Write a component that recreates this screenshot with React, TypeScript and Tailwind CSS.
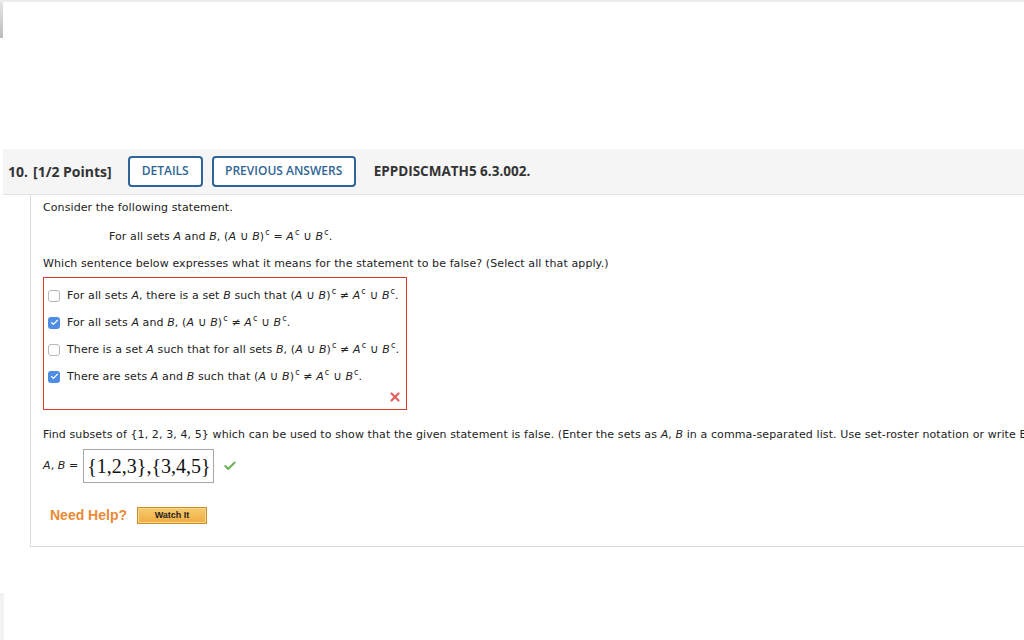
import { Check, X } from 'lucide-react';

const Sup = ({ children }: { children: React.ReactNode }) => (
  <sup className="text-[8px] -top-[5px] ml-[1px]">{children}</sup>
);

// (A ∪ B)^c <op> A^c ∪ B^c
function Expr({ op }: { op: string }) {
  return (
    <span>
      (<i>A</i> <span className="text-[12px]">∪</span> <i>B</i>)<Sup>c</Sup> {op} <i>A</i>
      <Sup>c</Sup> <span className="text-[12px]">∪</span> <i>B</i>
      <Sup>c</Sup>.
    </span>
  );
}

const OPTIONS = [
  {
    checked: false,
    text: (
      <>
        For all sets <i>A</i>, there is a set <i>B</i> such that <Expr op="≠" />
      </>
    ),
  },
  {
    checked: true,
    text: (
      <>
        For all sets <i>A</i> and <i>B</i>, <Expr op="≠" />
      </>
    ),
  },
  {
    checked: false,
    text: (
      <>
        There is a set <i>A</i> such that for all sets <i>B</i>, <Expr op="≠" />
      </>
    ),
  },
  {
    checked: true,
    text: (
      <>
        There are sets <i>A</i> and <i>B</i> such that <Expr op="≠" />
      </>
    ),
  },
];

export default function App() {
  return (
    <div className="w-[1024px] h-[640px] bg-white overflow-hidden border-t-2 border-[#ececec] font-['DejaVu_Sans',Verdana,sans-serif] text-[11px] tracking-[0.1px] text-[#222]">
      {/* top gap */}
      <div className="h-[147px] flex">
        <div className="w-[3px] h-[36px] bg-gradient-to-b from-[#e4e4e4] to-[#bdbdbd]" />
      </div>

      {/* Question header */}
      <div className="ml-[3px] h-[46px] bg-[#f5f5f5] border-b border-[#e2e2e2] flex items-center pl-[5px] pb-[1px] font-['Open_Sans',sans-serif] tracking-normal">
        <span className="font-bold text-[14px] text-[#333] w-[24px]">10.</span>
        <span className="font-bold text-[14px] text-[#333] ml-[1px]">[1/2 Points]</span>
        <button className="ml-[16px] h-[31px] w-[75px] border-2 border-[#2f6596] rounded-[4px] bg-white text-[#2f6596] text-[12px] font-semibold">
          DETAILS
        </button>
        <button className="ml-[9px] h-[31px] w-[144px] border-2 border-[#2f6596] rounded-[4px] bg-white text-[#2f6596] text-[12px] font-semibold">
          PREVIOUS ANSWERS
        </button>
        <span className="ml-[18px] font-bold text-[13.5px] text-[#333]">EPPDISCMATH5 6.3.002.</span>
      </div>

      {/* Question body */}
      <div className="ml-[30px] border-l border-b border-[#d9d9d9] h-[352px] pl-[12px] pt-[6px] whitespace-nowrap">
        <p className="leading-[14px]">Consider the following statement.</p>
        <p className="mt-[14px] ml-[66px] leading-[14px]">
          For all sets <i>A</i> and <i>B</i>, <Expr op="=" />
        </p>
        <p className="mt-[13px] leading-[14px]">
          Which sentence below expresses what it means for the statement to be false? (Select all that apply.)
        </p>

        <div className="mt-[6px] w-[364px] h-[133px] border border-[#d93a2b] pt-[4px] pl-[4px] flex flex-col relative">
          {OPTIONS.map((o, i) => (
            <div key={i} className="flex items-center h-[27px] gap-[7px]">
              {o.checked ? (
                <span className="w-[12px] h-[12px] rounded-[3px] bg-[#4f8de5] flex items-center justify-center">
                  <Check size={9} strokeWidth={3} className="text-white" />
                </span>
              ) : (
                <span className="w-[12px] h-[12px] rounded-[3px] border border-[#b8b8b8] bg-white" />
              )}
              <span>{o.text}</span>
            </div>
          ))}
          <X size={14} strokeWidth={4} className="absolute right-[4px] bottom-[5px] text-[#e46464]" />
        </div>

        <p className="mt-[18px] leading-[14px]">
          Find subsets of {'{'}1, 2, 3, 4, 5{'}'} which can be used to show that the given statement is false. (Enter the sets as <i>A</i>, <i>B</i> in a comma-separated list. Use set-roster notation or write EMPTY for the empty set.)
        </p>

        <div className="mt-[7px] flex items-center">
          <span>
            <i>A</i>, <i>B</i> =
          </span>
          <div className="ml-[5px] w-[131px] h-[34px] border border-[#a8a8a8] flex items-center justify-center font-['Liberation_Serif',serif] text-[20px] text-[#111] tracking-normal">
            {'{'}1,2,3{'}'},{'{'}3,4,5{'}'}
          </div>
          <Check size={14} strokeWidth={3.5} className="ml-[9px] text-[#6fb05a]" />
        </div>

        <div className="mt-[22px] ml-[7px] flex items-center font-['Liberation_Sans',Arial,sans-serif] tracking-normal">
          <span className="text-[14px] font-bold text-[#ea8a35]">Need Help?</span>
          <button className="ml-[10px] w-[70px] h-[17px] border border-[#c98a2a] bg-gradient-to-b from-[#f9c96a] to-[#eeae43] shadow-[inset_0_0_0_1px_#fbd88f] text-[9px] font-bold text-[#222] leading-none">
            Watch It
          </button>
        </div>
      </div>

      {/* bottom left strip */}
      <div className="mt-[46px] w-[4px] h-[60px] bg-[#f2f2f2]" />
    </div>
  );
}
